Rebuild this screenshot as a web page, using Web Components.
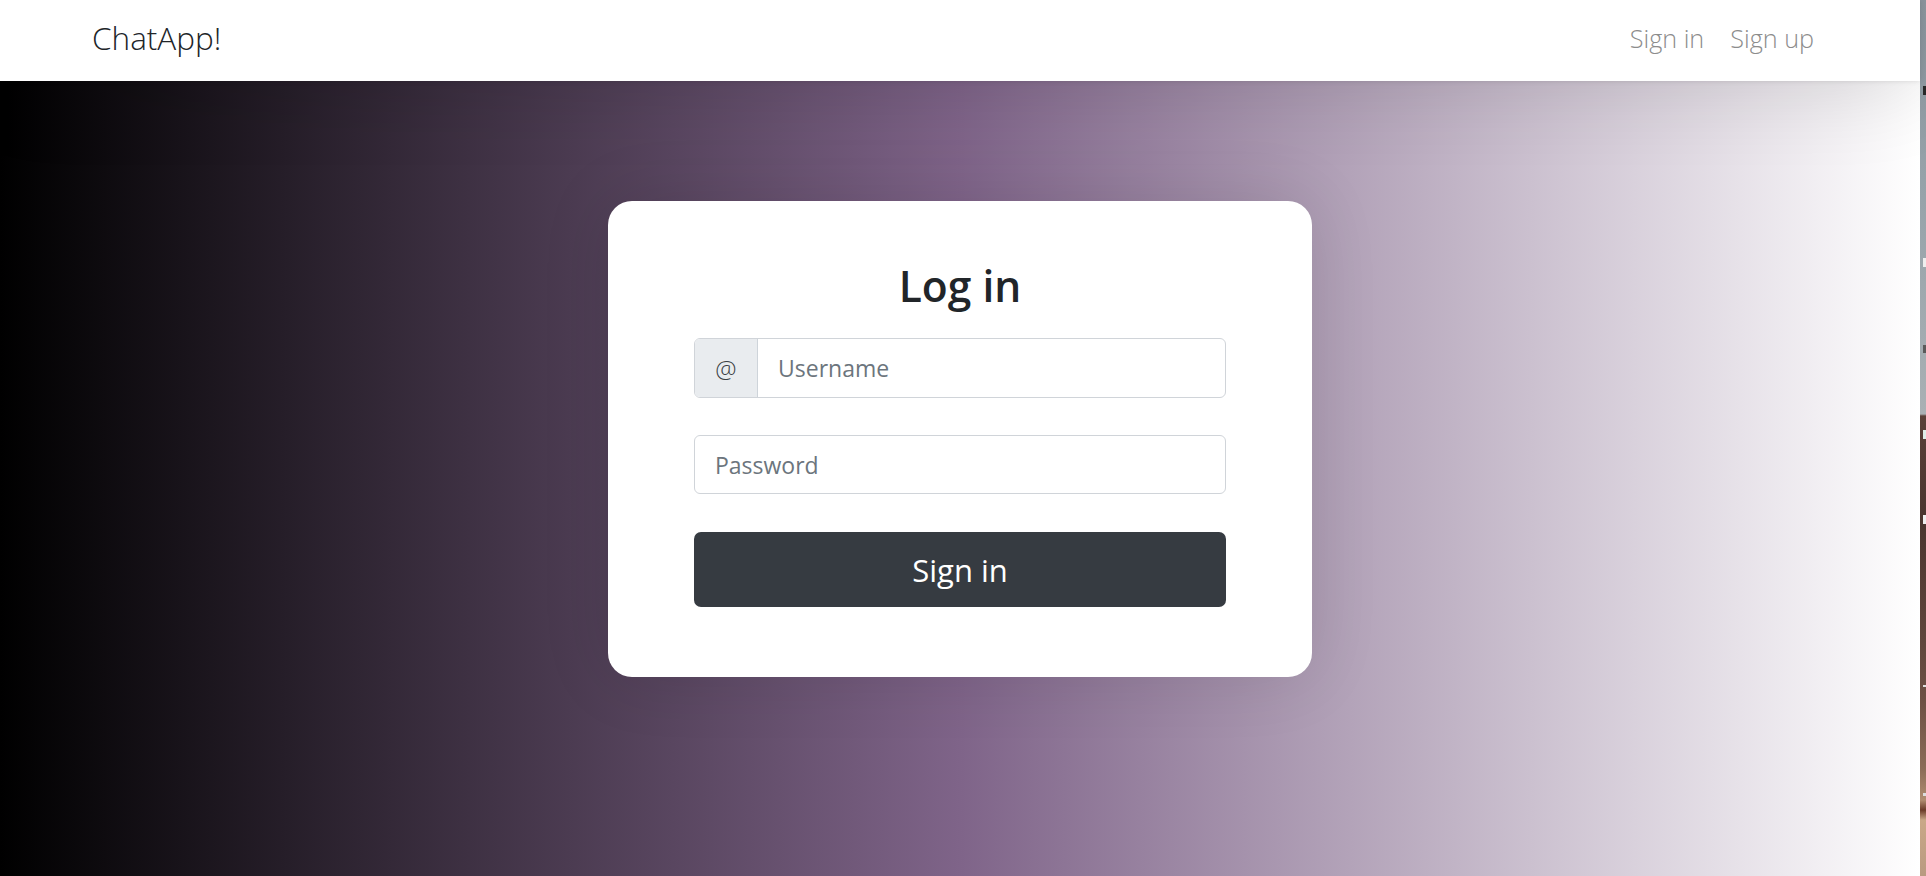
<!DOCTYPE html>
<html lang="en">
<head>
<meta charset="utf-8">
<title>ChatApp!</title>
<style>
  html, body { margin: 0; height: 100%; overflow: hidden; }
  body { display: flex; font-family: "Open Sans", "Noto Sans", sans-serif; }
</style>
</head>
<body>
<app-shell>
  <app-navbar brand="ChatApp!">
    <nav-link>Sign in</nav-link>
    <nav-link>Sign up</nav-link>
  </app-navbar>
  <login-page>
    <login-card heading="Log in">
      <text-field placeholder="Username" addon="@"></text-field>
      <text-field placeholder="Password" type="password"></text-field>
      <submit-button>Sign in</submit-button>
    </login-card>
  </login-page>
</app-shell>
<desktop-strip></desktop-strip>

<script>
// Small helper so every element gets an open shadow root with its own styles
class ShadowElement extends HTMLElement {
  constructor() {
    super();
    this.attachShadow({ mode: 'open' });
  }
  connectedCallback() {
    this.shadowRoot.innerHTML = this.render();
  }
}

class AppShell extends ShadowElement {
  render() {
    return `
      <style>
        :host { display: flex; flex-direction: column; flex: 0 0 1920px; height: 876px; }
      </style>
      <slot></slot>
    `;
  }
}

class AppNavbar extends ShadowElement {
  render() {
    return `
      <style>
        :host {
          display: flex;
          flex: 0 0 81px;
          box-sizing: border-box;
          align-items: center;
          justify-content: space-between;
          padding: 0 106px 5px 92px;
          background: #fff;
          position: relative;
          z-index: 1;
          box-shadow: 0 0 5px rgba(0,0,0,.12), 0 0 90px rgba(0,0,0,.16);
        }
        .brand { font-size: 31.5px; font-weight: 300; color: #212529; margin-bottom: 2px; }
        nav { display: flex; gap: 26px; }
      </style>
      <span class="brand">${this.getAttribute('brand')}</span>
      <nav><slot></slot></nav>
    `;
  }
}

class NavLink extends ShadowElement {
  render() {
    return `
      <style>
        :host { display: block; font-size: 25.2px; font-weight: 300; color: #8c8c8c; }
      </style>
      <slot></slot>
    `;
  }
}

class LoginPage extends ShadowElement {
  render() {
    return `
      <style>
        :host {
          display: flex;
          flex: 1;
          justify-content: center;
          align-items: flex-start;
          padding-top: 120px;
          background: linear-gradient(to right, #000 0%, #7f6489 50%, #fff 100%);
        }
      </style>
      <slot></slot>
    `;
  }
}

class LoginCard extends ShadowElement {
  render() {
    return `
      <style>
        :host {
          display: flex;
          flex-direction: column;
          box-sizing: border-box;
          width: 704px;
          height: 476px;
          padding: 56px 86px 0;
          background: #fff;
          border-radius: 24px;
          box-shadow: 0 0 70px rgba(0,0,0,.11);
        }
        h1 {
          margin: 0 0 24px;
          font-size: 42.5px;
          line-height: 57px;
          font-weight: 600;
          text-align: center;
          color: #212529;
        }
      </style>
      <h1>${this.getAttribute('heading')}</h1>
      <slot></slot>
    `;
  }
}

class TextField extends ShadowElement {
  render() {
    const addon = this.getAttribute('addon');
    const type = this.getAttribute('type') || 'text';
    return `
      <style>
        :host {
          display: flex;
          height: 60px;
          margin-bottom: 37px;
          box-sizing: border-box;
          border: 1px solid #d0d4d9;
          border-radius: 6px;
          overflow: hidden;
          background: #fff;
        }
        :host([type="password"]) { height: 59px; margin-bottom: 38px; }
        .addon {
          flex: 0 0 63px;
          display: flex;
          align-items: center;
          justify-content: center;
          background: #e9ecef;
          border-right: 1px solid #ced4da;
          font-size: 24px;
          font-weight: 300;
          color: #3a3f44;
          box-sizing: border-box;
        }
        input {
          flex: 1;
          min-width: 0;
          border: 0;
          outline: 0;
          padding: 0 20px;
          background: transparent;
          font: 400 23px "Open Sans", "Noto Sans", sans-serif;
          color: #212529;
        }
        input::placeholder { color: #6c757d; opacity: 1; }
      </style>
      ${addon ? `<span class="addon">${addon}</span>` : ''}
      <input type="${type}" placeholder="${this.getAttribute('placeholder')}">
    `;
  }
}

class SubmitButton extends ShadowElement {
  render() {
    return `
      <style>
        :host { display: block; }
        button {
          display: block;
          width: 100%;
          height: 75px;
          padding: 0;
          border: 0;
          border-radius: 7px;
          background: #363b41;
          color: #fff;
          font: 400 31px "Open Sans", "Noto Sans", sans-serif;
        }
      </style>
      <button type="button"><slot></slot></button>
    `;
  }
}

// The sliver of desktop wallpaper visible next to the browser window
class DesktopStrip extends ShadowElement {
  render() {
    const marks = [
      [86, '#2a2a2a', 9], [258, '#eee', 9], [345, '#5a5a5a', 8], [430, '#dfeee8', 9], [515, '#eee', 9], [685, '#ddd', 2], [793, '#ddd', 3]
    ];
    return `
      <style>
        :host {
          display: block;
          position: relative;
          flex: 0 0 6px;
          height: 876px;
          overflow: hidden;
          background: linear-gradient(to bottom,
            #8d98a1 0, #97a3aa 200px, #a9b0b4 414px,
            #5a4038 416px, #4a352f 520px, #5f463c 640px, #6d5044 700px,
            #8c6d58 770px, #b08d70 800px, #6a3a28 810px, #c9a888 820px, #b99a80 876px);
        }
        span { position: absolute; left: 3px; width: 3px; }
      </style>
      ${marks.map(([top, color, h]) => `<span style="top:${top}px;height:${h}px;background:${color}"></span>`).join('')}
    `;
  }
}

customElements.define('app-shell', AppShell);
customElements.define('app-navbar', AppNavbar);
customElements.define('nav-link', NavLink);
customElements.define('login-page', LoginPage);
customElements.define('login-card', LoginCard);
customElements.define('text-field', TextField);
customElements.define('submit-button', SubmitButton);
customElements.define('desktop-strip', DesktopStrip);
</script>
</body>
</html>
